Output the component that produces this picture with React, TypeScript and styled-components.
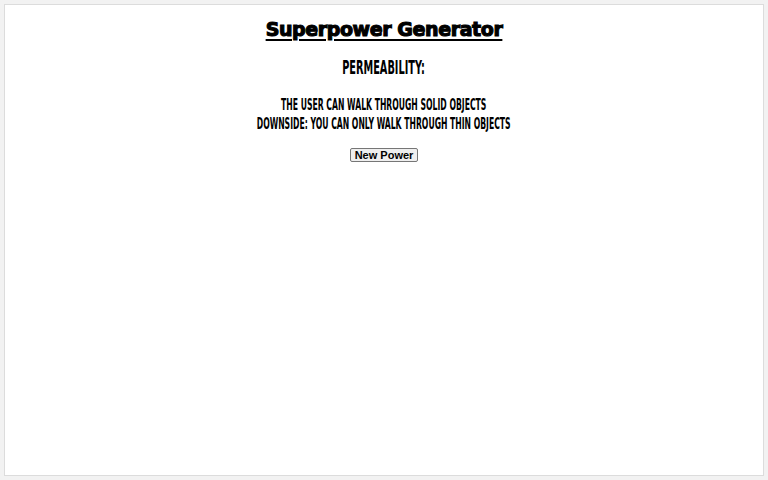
import React from 'react'
import styled, { createGlobalStyle } from 'styled-components'

const GlobalStyle = createGlobalStyle`
  html, body {
    margin: 0;
    background: #f2f2f2;
  }
  #root {
    height: 100vh;
    padding: 4px;
    box-sizing: border-box;
  }
`

const Card = styled.main`
  height: 100%;
  box-sizing: border-box;
  background: #fff;
  border: 1px solid #dcdcdc;
  display: flex;
  flex-direction: column;
  align-items: center;
  padding-top: 11px;
`

const Title = styled.h1`
  margin: 0;
  font-family: 'DejaVu Sans', sans-serif;
  font-weight: 700;
  font-size: 19px;
  line-height: 26px;
  letter-spacing: -0.4px;
  -webkit-text-stroke: 1.1px #000;
  text-decoration: underline;
  text-decoration-thickness: 2px;
  text-underline-offset: 3px;
  color: #000;
`

// Tall, narrow all-caps lettering
const Condensed = styled.div<{ $size: number }>`
  font-family: 'DejaVu Sans Condensed', 'DejaVu Sans', sans-serif;
  font-weight: 700;
  text-transform: uppercase;
  font-size: ${(p) => p.$size}px;
  color: #000;
  transform: scaleX(0.57);
  white-space: nowrap;
  text-align: center;
`

const PowerName = styled(Condensed)`
  margin-top: 13px;
  line-height: 24px;
`

const Details = styled(Condensed)`
  margin-top: 17px;
  line-height: 19px;
`

const Button = styled.button`
  margin-top: 14px;
  font-family: 'Liberation Sans', Arial, sans-serif;
  font-weight: 700;
  font-size: 11px;
  line-height: 12px;
  padding: 0 4px;
  background: #efefef;
  border: 1px solid #767676;
  border-radius: 2px;
  color: #000;
`

export default function App() {
  return (
    <>
      <GlobalStyle />
      <Card>
        <Title>Superpower Generator</Title>
        <PowerName $size={19}>Permeability:</PowerName>
        <Details $size={15}>
          The user can walk through solid objects
          <br />
          Downside: you can only walk through thin objects
        </Details>
        <Button>New Power</Button>
      </Card>
    </>
  )
}
